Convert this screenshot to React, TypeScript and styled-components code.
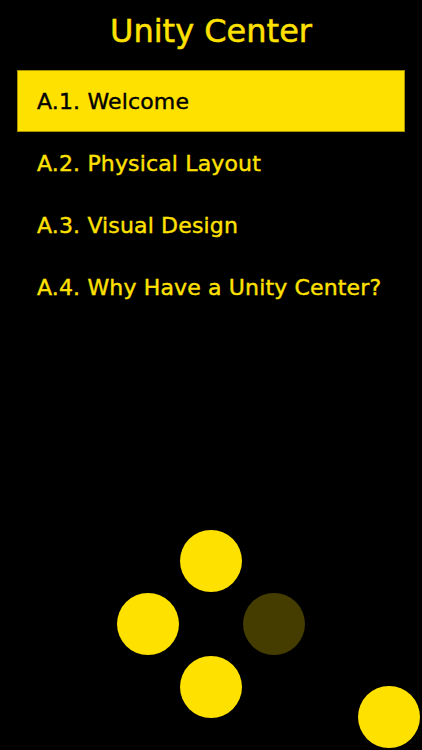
import React from "react"
import styled, { createGlobalStyle } from "styled-components"

const yellow = "#ffe100"

const GlobalStyle = createGlobalStyle`
  html, body {
    margin: 0;
    padding: 0;
    background: #000;
  }
  body {
    font-family: "DejaVu Sans", Verdana, sans-serif;
  }
`

const sections = [
  "A.1. Welcome",
  "A.2. Physical Layout",
  "A.3. Visual Design",
  "A.4. Why Have a Unity Center?",
]

export default function App() {
  const selected = 0
  return (
    <Screen>
      <GlobalStyle />
      <Title>Unity Center</Title>
      <Menu>
        {sections.map((label, i) => (
          <MenuItem key={label} $active={i === selected}>
            {label}
          </MenuItem>
        ))}
      </Menu>
      <Pad>
        <PadButton $col={2} $row={1} aria-label="up" />
        <PadButton $col={1} $row={2} aria-label="left" />
        <PadButton $col={3} $row={2} $dim aria-label="right" />
        <PadButton $col={2} $row={3} aria-label="down" />
      </Pad>
      <CornerButton aria-label="select" />
    </Screen>
  )
}

const Screen = styled.div`
  position: relative;
  min-height: 750px;
  overflow: hidden;
  display: flex;
  flex-direction: column;
`

const Title = styled.h1`
  box-sizing: border-box;
  height: 70px;
  margin: 0;
  padding-top: 12px;
  font-size: 32px;
  font-weight: 400;
  line-height: 38px;
  text-align: center;
  color: ${yellow};
  -webkit-text-stroke: 0.5px ${yellow};
`

const Menu = styled.ul`
  list-style: none;
  margin: 0 17px;
  padding: 0;
  display: flex;
  flex-direction: column;
`

const MenuItem = styled.li<{ $active?: boolean }>`
  box-sizing: border-box;
  height: 62px;
  display: flex;
  align-items: center;
  padding: 0 19px;
  font-size: 22px;
  letter-spacing: 0.15px;
  color: ${({ $active }) => ($active ? "#000" : yellow)};
  -webkit-text-stroke: 0.4px ${({ $active }) => ($active ? "#000" : yellow)};
  background: ${({ $active }) => ($active ? yellow : "transparent")};
  border: 1px solid ${({ $active }) => ($active ? "#a89300" : "transparent")};
`

const Pad = styled.div`
  margin: 212px auto 0;
  display: grid;
  grid-template-columns: repeat(3, 62px);
  grid-template-rows: repeat(3, 62px);
  gap: 1px;
`

const Circle = styled.button`
  width: 62px;
  height: 62px;
  padding: 0;
  border: none;
  border-radius: 50%;
  background: ${yellow};
`

const PadButton = styled(Circle)<{ $col: number; $row: number; $dim?: boolean }>`
  grid-column: ${({ $col }) => $col};
  grid-row: ${({ $row }) => $row};
  background: ${({ $dim }) => ($dim ? "#453c00" : yellow)};
`

const CornerButton = styled(Circle)`
  position: absolute;
  right: 2px;
  bottom: 2px;
`
